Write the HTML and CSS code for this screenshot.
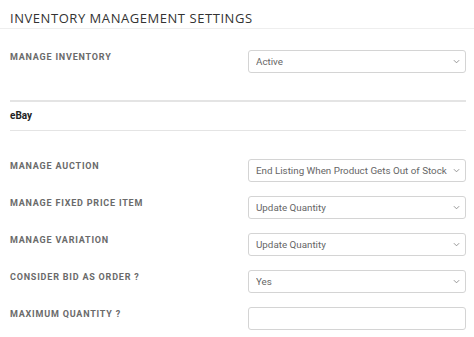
FILE: index.html
```html
<!DOCTYPE html>
<html lang="en">
<head>
  <meta charset="UTF-8" />
  <title>Inventory Management Settings</title>
  <link rel="stylesheet" href="styles.css">
</head>
<body>

  <h2 class="title">INVENTORY MANAGEMENT SETTINGS</h2>

  <div class="panel">
    <div class="row">
      <label>MANAGE INVENTORY</label>
      <div class="pick">
        <select><option>Active</option></select>
        <svg class="chev" viewBox="0 0 8 5"><path d="M1 1l3 3 3-3" /></svg>
      </div>
    </div>

    <div class="group">eBay</div>

    <div class="row">
      <label>MANAGE AUCTION</label>
      <div class="pick">
        <select><option>End Listing When Product Gets Out of Stock</option></select>
        <svg class="chev" viewBox="0 0 8 5"><path d="M1 1l3 3 3-3" /></svg>
      </div>
    </div>
    <div class="row">
      <label>MANAGE FIXED PRICE ITEM</label>
      <div class="pick">
        <select><option>Update Quantity</option></select>
        <svg class="chev" viewBox="0 0 8 5"><path d="M1 1l3 3 3-3" /></svg>
      </div>
    </div>
    <div class="row">
      <label>MANAGE VARIATION</label>
      <div class="pick">
        <select><option>Update Quantity</option></select>
        <svg class="chev" viewBox="0 0 8 5"><path d="M1 1l3 3 3-3" /></svg>
      </div>
    </div>
    <div class="row">
      <label>CONSIDER BID AS ORDER ?</label>
      <div class="pick">
        <select><option>Yes</option></select>
        <svg class="chev" viewBox="0 0 8 5"><path d="M1 1l3 3 3-3" /></svg>
      </div>
    </div>
    <div class="row">
      <label>MAXIMUM QUANTITY ?</label>
      <div class="pick">
        <input type="text">
      </div>
    </div>
  </div>

</body>
</html>
```

FILE: styles.css
```css
body {
  font-family: "Roboto", "Liberation Sans", sans-serif;
  font-size: 10px;
  margin: 0;
  background: #fff;
}
.title {
  font-family: "Open Sans", "Liberation Sans", sans-serif;
  font-size: 13px;
  font-weight: 400;
  letter-spacing: 0.55px;
  color: #333;
  margin: 0;
  padding: 9px 10px 0;
  height: 19px;
  border-bottom: 1px solid #eee;
}
.panel {
  padding: 21px 8px 0 10px;
}
.row {
  display: flex;
  align-items: flex-start;
  margin-bottom: 14px;
}
label {
  flex: 1;
  font-size: 9px;
  font-weight: 700;
  letter-spacing: 0.8px;
  color: #6a6a6a;
  padding-top: 2px;
}
.pick {
  position: relative;
  width: 218px;
}
select,
input {
  display: block;
  box-sizing: border-box;
  width: 100%;
  height: 23px;
  margin: 0;
  padding: 0 12px 0 7px;
  border: 1px solid #d4d4d4;
  border-radius: 3px;
  background: #fff;
  font-family: inherit;
  font-size: 9.8px;
  color: #666;
  -webkit-appearance: none;
  appearance: none;
}
.chev {
  position: absolute;
  right: 6px;
  top: 9px;
  width: 7px;
  height: 5px;
  pointer-events: none;
}
.chev path {
  fill: none;
  stroke: #888;
  stroke-width: 1;
}
.group {
  margin: 27px 0 28px;
  padding: 8px 0;
  border-top: 2px solid #e4e4e4;
  border-bottom: 1px solid #e4e4e4;
  font-size: 10px;
  font-weight: 700;
  color: #222;
  line-height: 12px;
}
```
